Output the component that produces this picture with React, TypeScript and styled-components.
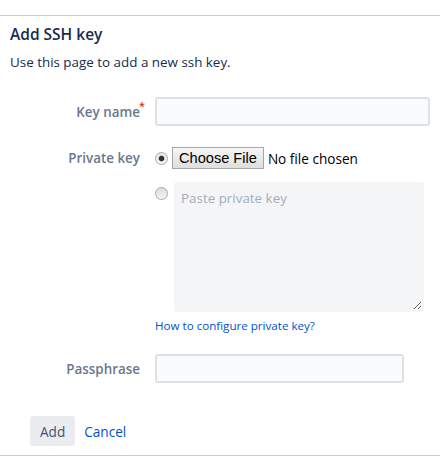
import styled, { createGlobalStyle } from 'styled-components';

const GlobalStyle = createGlobalStyle`
  body {
    margin: 0;
    background: #fff;
    font-family: 'Open Sans', 'Liberation Sans', sans-serif;
    color: #172b4d;
  }
`;

const App = () => {
  return (
    <Page>
      <GlobalStyle />
      <Rule />
      <Header>
        <Title>Add SSH key</Title>
        <Intro>Use this page to add a new ssh key.</Intro>
      </Header>
      <Form>
        <Label>
          Key name<Required>*</Required>
        </Label>
        <Field>
          <TextInput width={275} />
        </Field>

        <Label $top={22}>Private key</Label>
        <Field>
          <ChoiceRow>
            <Radio $checked />
            <FileButton type="button">Choose File</FileButton>
            <FileText>No file chosen</FileText>
          </ChoiceRow>
        </Field>

        <div />
        <Field>
          <PasteRow>
            <Radio $top={5} />
            <PasteArea placeholder="Paste private key" />
          </PasteRow>
          <HelpLink href="#">How to configure private key?</HelpLink>
        </Field>

        <Label $top={25}>Passphrase</Label>
        <Field>
          <TextInput width={249} type="password" $top={20} />
        </Field>
      </Form>
      <Actions>
        <AddButton type="button">Add</AddButton>
        <CancelLink href="#">Cancel</CancelLink>
      </Actions>
      <Rule />
    </Page>
  );
};

const Page = styled.div`
  width: 440px;
  padding-top: 15px;
`;

const Rule = styled.div`
  height: 1px;
  background: #cccccc;
`;

const Header = styled.div`
  padding: 7px 10px 0;
`;

const Title = styled.h2`
  margin: 0;
  font-size: 15.5px;
  line-height: 22px;
  font-weight: 600;
  color: #172b4d;
`;

const Intro = styled.p`
  margin: 7px 0 0;
  font-size: 13.4px;
  line-height: 20px;
  color: #172b4d;
`;

const Form = styled.div`
  display: grid;
  grid-template-columns: 140px 1fr;
  column-gap: 15px;
  row-gap: 0;
  margin-top: 25px;
  align-items: start;
`;

const Label = styled.div<{ $top?: number }>`
  position: relative;
  text-align: right;
  font-size: 13.4px;
  font-weight: 600;
  line-height: 20px;
  color: #6b778c;
  padding-top: ${(p) => p.$top ?? 5}px;
  white-space: nowrap;
`;

const Required = styled.span`
  position: absolute;
  right: -5px;
  top: 3px;
  color: #de350b;
  font-size: 11px;
  line-height: 11px;
`;

const Field = styled.div`
  display: flex;
  flex-direction: column;
  align-items: flex-start;
`;

const TextInput = styled.input<{ width: number; $top?: number }>`
  box-sizing: border-box;
  width: ${(p) => p.width}px;
  height: 29px;
  margin: ${(p) => p.$top ?? 0}px 0 0;
  border: 2px solid #dfe1e6;
  border-radius: 3px;
  background: #fafbfc;
  padding: 0 6px;
  font: inherit;
  font-size: 14px;
  outline: none;
`;

const ChoiceRow = styled.div`
  display: flex;
  align-items: center;
  height: 22px;
  margin-top: 21px;
`;

const Radio = styled.span<{ $checked?: boolean; $top?: number }>`
  box-sizing: border-box;
  flex: none;
  width: 13px;
  height: 13px;
  border-radius: 50%;
  border: 1px solid #a9a9a9;
  background: ${(p) =>
    p.$checked
      ? 'radial-gradient(circle, #333 0 2.4px, #9a9a9a 2.8px, transparent 3.4px), linear-gradient(#e8e8e8, #f8f8f8)'
      : 'linear-gradient(#dcdcdc, #f4f4f4)'};
  margin-top: ${(p) => p.$top ?? 0}px;
`;

const FileButton = styled.button`
  box-sizing: border-box;
  height: 22px;
  margin-left: 4px;
  padding: 0 6px;
  border: 1px solid #a6a6a6;
  border-radius: 0;
  background: linear-gradient(#f6f6f6, #dedede);
  font-family: 'Liberation Sans', Arial, sans-serif;
  font-size: 14.6px;
  color: #000;
`;

const FileText = styled.span`
  margin-left: 4px;
  font-size: 13.6px;
  color: #000;
`;

const PasteRow = styled.div`
  display: flex;
  align-items: flex-start;
  gap: 6px;
  margin-top: 13px;
`;

const PasteArea = styled.textarea`
  box-sizing: border-box;
  width: 250px;
  height: 130px;
  border: 2px solid #f4f5f7;
  border-radius: 3px;
  background: #f4f5f7;
  padding: 5px 5px;
  font: inherit;
  font-size: 13.4px;
  color: #172b4d;
  resize: vertical;
  outline: none;

  &::placeholder {
    color: #a5adba;
  }
`;

const HelpLink = styled.a`
  margin-top: 6px;
  font-size: 11.6px;
  line-height: 16px;
  color: #0052cc;
  text-decoration: none;
`;

const Actions = styled.div`
  display: flex;
  align-items: center;
  gap: 9px;
  padding: 33px 0 9px 30px;
`;

const AddButton = styled.button`
  height: 30px;
  padding: 0 10px;
  border: none;
  border-radius: 3px;
  background: #ebecf0;
  color: #42526e;
  font: inherit;
  font-size: 13.6px;
`;

const CancelLink = styled.a`
  font-size: 13.6px;
  color: #0052cc;
  text-decoration: none;
`;

export default App;
